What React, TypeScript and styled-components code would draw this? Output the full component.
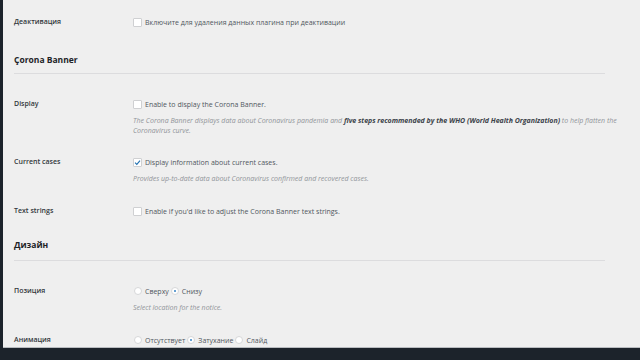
import React from "react";
import styled, { createGlobalStyle } from "styled-components";

const Global = createGlobalStyle`
  html, body { margin: 0; padding: 0; background: #1d242c; }
  body { width: 640px; height: 360px; overflow: hidden; font-family: "Open Sans", "Noto Sans", sans-serif; }
`;

const Screen = styled.div`
  width: 640px;
  height: 360px;
  background: #1c232b;
  display: flex;
  flex-direction: column;
`;

const Panel = styled.div`
  margin-left: 3px;
  height: 348px;
  background: #efefef;
  border-bottom: 1px solid #b9bcc0;
  padding: 6px 35px 0 11px;
  box-sizing: border-box;
  overflow: hidden;
`;

const Row = styled.div<{ $pad?: number }>`
  display: grid;
  grid-template-columns: 119px 1fr;
  padding: 11px 0 ${(p) => p.$pad ?? 11}px;
`;

const Label = styled.div`
  font-size: 7px;
  line-height: 10px;
  font-weight: 600;
  color: #32373c;
`;

const Field = styled.div`
  display: flex;
  flex-direction: column;
`;

const Line = styled.div`
  display: flex;
  align-items: center;
  height: 10px;
  font-size: 7px;
  color: #50575e;
  white-space: nowrap;
`;

const Box = styled.span`
  width: 9px;
  height: 9px;
  box-sizing: border-box;
  border: 1px solid #cfd0d2;
  background: #fff;
  border-radius: 1px;
  margin-right: 3px;
  display: inline-flex;
  align-items: center;
  justify-content: center;
`;

const Radio = styled.span<{ $checked?: boolean }>`
  width: 8px;
  height: 8px;
  box-sizing: border-box;
  border: 1px solid #d6d7d9;
  background: #fff;
  border-radius: 50%;
  margin: 0 3px 0 1px;
  display: inline-flex;
  align-items: center;
  justify-content: center;
  &::after {
    content: "";
    width: 2px;
    height: 2px;
    border-radius: 50%;
    background: ${(p) => (p.$checked ? "#3582c4" : "transparent")};
  }
`;

const Desc = styled.div`
  margin-top: 7px;
  font-size: 7px;
  line-height: 10px;
  font-style: italic;
  color: #8f9499;
  white-space: nowrap;
  b { color: #3c434a; font-weight: 700; }
`;

const Heading = styled.div<{ $top: number; $pad: number; $bottom: number }>`
  margin-top: ${(p) => p.$top}px;
  padding-bottom: ${(p) => p.$pad}px;
  margin-bottom: ${(p) => p.$bottom}px;
  border-bottom: 1px solid #dcdcde;
  font-size: 8.5px;
  line-height: 12px;
  font-weight: 700;
  color: #1d2327;
`;

const OptText = styled.span`
  margin-right: 1px;
`;

const Check = () => (
  <svg width="7" height="7" viewBox="0 0 10 10">
    <path d="M1.5 5.2 L4 7.6 L8.6 2.2" fill="none" stroke="#2271b1" strokeWidth="1.6" />
  </svg>
);

const Opt = ({ label, checked }: { label: string; checked?: boolean }) => (
  <>
    <Radio $checked={checked} />
    <OptText>{label}</OptText>
  </>
);

export default function App() {
  return (
    <>
      <Global />
      <Screen>
        <Panel>
          <Row>
            <Label>Деактивация</Label>
            <Field>
              <Line>
                <Box />
                Включите для удаления данных плагина при деактивации
              </Line>
            </Field>
          </Row>
          <Heading $top={16} $pad={7} $bottom={14}>Çorona Banner</Heading>
          <Row $pad={10}>
            <Label>Display</Label>
            <Field>
              <Line>
                <Box />
                Enable to display the Corona Banner.
              </Line>
              <Desc>
                The Corona Banner displays data about Coronavirus pandemia and{" "}
                <b>five steps recommended by the WHO (World Health Organization)</b> to help flatten the
                <br />
                Coronavirus curve.
              </Desc>
            </Field>
          </Row>
          <Row>
            <Label>Current cases</Label>
            <Field>
              <Line>
                <Box>
                  <Check />
                </Box>
                Display information about current cases.
              </Line>
              <Desc>Provides up-to-date data about Coronavirus confirmed and recovered cases.</Desc>
            </Field>
          </Row>
          <Row>
            <Label>Text strings</Label>
            <Field>
              <Line>
                <Box />
                Enable if you'd like to adjust the Corona Banner text strings.
              </Line>
            </Field>
          </Row>
          <Heading $top={12} $pad={9} $bottom={14}>Дизайн</Heading>
          <Row>
            <Label>Позиция</Label>
            <Field>
              <Line>
                <Opt label="Сверху" />
                <Opt label="Снизу" checked />
              </Line>
              <Desc>Select location for the notice.</Desc>
            </Field>
          </Row>
          <Row>
            <Label>Анимация</Label>
            <Field>
              <Line>
                <Opt label="Отсутствует" />
                <Opt label="Затухание" checked />
                <Opt label="Слайд" />
              </Line>
            </Field>
          </Row>
        </Panel>
      </Screen>
    </>
  );
}
